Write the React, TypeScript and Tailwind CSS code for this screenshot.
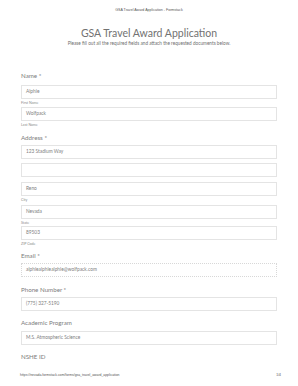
import React from "react";

const lato = { fontFamily: "Lato, 'Open Sans', sans-serif" };

function Input({ value, className = "", dashed = false }: { value: string; className?: string; dashed?: boolean }) {
  return (
    <div
      className={`h-[14px] w-[256px] border ${dashed ? "border-dotted border-[#d8d8d8]" : "border-[#e4e4e4]"} bg-white flex items-center pl-[4px] text-[4.8px] text-[#808080] ${className}`}
    >
      {value}
    </div>
  );
}

function Sub({ text }: { text: string }) {
  return <div className="h-[7px] leading-[7px] text-[3.6px] text-[#8a8a8a]">{text}</div>;
}

function Label({ text, className = "" }: { text: string; className?: string }) {
  return <div className={`h-[8px] leading-[8px] text-[6.2px] text-[#7c7c7c] ${className}`}>{text}</div>;
}

export default function App() {
  return (
    <div className="w-[298px] h-[386px] bg-white relative overflow-hidden">
      <div
        className="pt-[8px] leading-[4px] text-[3.6px] text-center text-[#555]"
        style={{ fontFamily: "'Liberation Sans', Arial, sans-serif" }}
      >
        GSA Travel Award Application - Formstack
      </div>
      <div style={lato} className="text-center">
        <div className="mt-[15px] text-[10.5px] leading-[12px] text-[#727272]">GSA Travel Award Application</div>
        <div className="mt-[1px] text-[4.7px] leading-[6px] text-[#707070]">
          Please fill out all the required fields and attach the requested documents below.
        </div>
      </div>
      <div style={lato} className="pl-[21px]">
        <Label text="Name *" className="mt-[26px]" />
        <Input value="Alphie" className="mt-[5px]" />
        <Sub text="First Name" />
        <Input value="Wolfpack" className="mt-[1px]" />
        <Sub text="Last Name" />
        <Label text="Address *" className="mt-[6px]" />
        <Input value="123 Stadium Way" className="mt-[3px]" />
        <Input value="" className="mt-[4px]" />
        <Input value="Reno" className="mt-[5px]" />
        <Sub text="City" />
        <Input value="Nevada" className="mt-[2px]" />
        <Sub text="State" />
        <Input value="89503" className="mt-[0px]" />
        <Sub text="ZIP Code" />
        <Label text="Email *" className="mt-[5px]" />
        <Input value="alphiealphiealphie@wolfpack.com" dashed className="mt-[3px]" />
        <Label text="Phone Number *" className="mt-[9px]" />
        <Input value="(775) 327-5190" className="mt-[3px]" />
        <Label text="Academic Program" className="mt-[8px]" />
        <Input value="M.S. Atmospheric Science" className="mt-[4px]" />
        <Label text="NSHE ID" className="mt-[8px]" />
      </div>
      <div
        className="absolute left-[20px] right-[17px] top-[373px] flex justify-between text-[3.4px] leading-[4px] text-[#555]"
        style={{ fontFamily: "'Liberation Sans', Arial, sans-serif" }}
      >
        <span>https://nevada.formstack.com/forms/gsa_travel_award_application</span>
        <span>1/4</span>
      </div>
    </div>
  );
}
